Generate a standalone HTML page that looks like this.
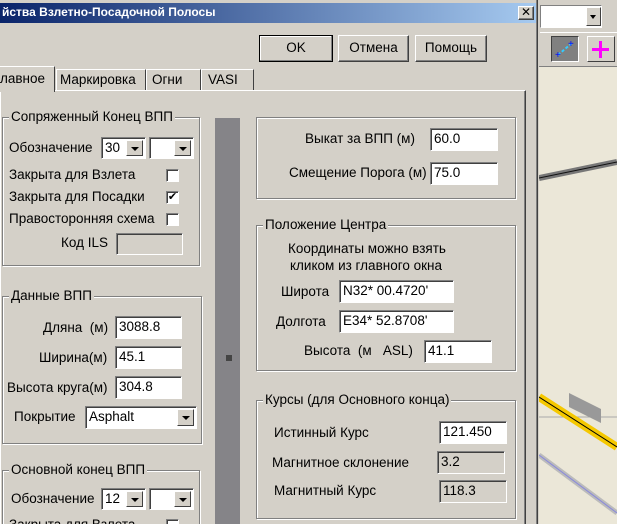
<!DOCTYPE html>
<html style="overflow:hidden"><head><meta charset="utf-8"><style>
*{box-sizing:border-box;margin:0;padding:0}
html,body{overflow:hidden}
body{width:617px;height:524px;background:#d4d0c8;font-family:"Liberation Sans","DejaVu Sans",sans-serif;font-size:13px;color:#000;position:relative}
.a{position:absolute}
.t{position:absolute;white-space:nowrap;font-size:13.5px}
.btn{position:absolute;background:#d4d0c8;border:1px solid;border-color:#fff #404040 #404040 #fff;box-shadow:inset -1px -1px 0 #808080;text-align:center;font-size:13.5px}
.in{position:absolute;background:#fff;border:1px solid;border-color:#808080 #fff #fff #808080;box-shadow:inset 1px 1px 0 #404040;padding:2px 0 0 3px;font-size:13.5px;white-space:nowrap}
.dis{background:#d4d0c8}
.grp{position:absolute;border:1px solid #808080;box-shadow:1px 1px 0 #fff,inset 1px 1px 0 #fff}
.grp span{position:absolute;top:-9px;left:6px;background:#d4d0c8;padding:0 2px;font-size:13.5px;white-space:nowrap}
.dd{position:absolute;width:17px;top:2px;bottom:2px;right:2px;background:#d4d0c8;border:1px solid;border-color:#fff #404040 #404040 #fff}
.dd:after{content:"";position:absolute;left:4px;top:6px;border:4px solid transparent;border-top:4px solid #000;border-bottom:0}
.cb{position:absolute;width:13px;height:13px;background:#fff;border:1px solid;border-color:#808080 #fff #fff #808080;box-shadow:inset 1px 1px 0 #404040;font-size:11px;line-height:11px;text-align:center}
</style></head><body>
<div class="a" style="left:538px;top:0;width:79px;height:524px;background:#d4d0c8"></div>
<div class="a" style="left:540px;top:5px;width:62px;height:23px;background:#fff;border:1px solid;border-color:#808080 #fff #fff #808080"></div>
<div class="a" style="left:586px;top:7px;width:15px;height:19px;background:#d4d0c8;border:1px solid;border-color:#fff #404040 #404040 #fff"></div>
<div class="a" style="left:590px;top:15px;border:3.5px solid transparent;border-top:4px solid #000;border-bottom:0"></div>
<div class="a" style="left:540px;top:32px;width:77px;height:1px;background:#fff"></div>
<div class="a" style="left:551px;top:36px;width:28px;height:26px;background:#808080;border:1px solid;border-color:#404040 #fff #fff #404040"></div>
<svg class="a" style="left:555px;top:40px" width="20" height="18"><line x1="3" y1="15" x2="17" y2="3" stroke="#3cf" stroke-width="2" stroke-dasharray="3,2"/><text x="0" y="18" fill="#00f" font-size="10">+</text><text x="13" y="7" fill="#00f" font-size="10">+</text></svg>
<div class="a" style="left:587px;top:36px;width:28px;height:26px;border:1px solid;border-color:#fff #404040 #404040 #fff"></div>
<div class="a" style="left:592px;top:48px;width:17px;height:3px;background:#f0f"></div>
<div class="a" style="left:599px;top:41px;width:3px;height:17px;background:#f0f"></div>
<div class="a" style="left:539px;top:66px;width:78px;height:458px;background:#ebe7d8;border-top:1px solid #808080"></div>
<svg class="a" style="left:539px;top:66px" width="78" height="458">
<path d="M0 112 L78 96" stroke="#777" stroke-width="6"/><path d="M0 112 L78 96" stroke="#111" stroke-width="1"/>
<path d="M0 351 L78 351" stroke="#aaa" stroke-width="1"/>
<path d="M30 327 L62 343 L62 357 L30 341Z" fill="#999"/>
<path d="M0 331 L78 381" stroke="#f5c800" stroke-width="8"/><path d="M0 331 L78 381" stroke="#000" stroke-width="1"/>
<path d="M0 389 L78 447" stroke="#bbb" stroke-width="5"/><path d="M0 389 L78 447" stroke="#88d" stroke-width="1"/>
</svg>
<div class="a" style="left:0;top:0;width:538px;height:524px;background:#d4d0c8;border-right:1px solid #404040;box-shadow:inset -1px 0 0 #808080"></div>
<div class="a" style="left:0;top:3px;width:536px;height:20px;background:linear-gradient(90deg,#0a246a,#a6caf0)"></div>
<div class="t" style="left:2px;top:5px;color:#fff;font-weight:bold;font-size:12px">йства Взлетно-Посадочной Полосы</div>
<div class="btn" style="left:518px;top:6px;width:16px;height:14px;font-size:12px;line-height:11px;font-weight:bold">✕</div>
<div class="btn" style="left:259px;top:35px;width:74px;height:27px;line-height:24px;border:1px solid #000;box-shadow:inset -1px -1px 0 #808080,inset 1px 1px 0 #fff">OK</div>
<div class="btn" style="left:338px;top:35px;width:71px;height:27px;line-height:24px">Отмена</div>
<div class="btn" style="left:415px;top:35px;width:72px;height:27px;line-height:24px">Помощь</div>
<div class="a" style="left:0;top:90px;width:526px;height:434px;border:1px solid;border-bottom:0;border-color:#fff #404040 #404040 #fff;box-shadow:inset -1px 0 0 #808080"></div>
<div class="a" style="left:-3px;top:66px;width:58px;height:26px;background:#d4d0c8;border:1px solid;border-color:#fff #404040 transparent #fff;border-bottom:0"></div>
<div class="t" style="left:0;top:71px">лавное</div>
<div class="a" style="left:56px;top:69px;width:90px;height:21px;border:1px solid;border-color:#fff #404040 transparent #fff;border-bottom:0"></div>
<div class="t" style="left:60px;top:72px">Маркировка</div>
<div class="a" style="left:146px;top:69px;width:55px;height:21px;border:1px solid;border-color:#fff #404040 transparent #fff;border-bottom:0"></div>
<div class="t" style="left:152px;top:72px">Огни</div>
<div class="a" style="left:201px;top:69px;width:53px;height:21px;border:1px solid;border-color:#fff #404040 transparent #fff;border-bottom:0"></div>
<div class="t" style="left:208px;top:72px">VASI</div>
<div class="a" style="left:215px;top:118px;width:25px;height:406px;background:#858488"></div>
<div class="a" style="left:226px;top:355px;width:6px;height:6px;background:#444"></div>
<div class="grp" style="left:2px;top:117px;width:198px;height:149px"><span>Сопряженный Конец ВПП</span></div>
<div class="t" style="left:9px;top:140px">Обозначение</div>
<div class="in" style="left:101px;top:137px;width:45px;height:22px">30<div class="dd"></div></div>
<div class="in" style="left:149px;top:137px;width:45px;height:22px"><div class="dd"></div></div>
<div class="t" style="left:9px;top:167px">Закрыта для Взлета</div>
<div class="cb" style="left:166px;top:169px"></div>
<div class="t" style="left:9px;top:189px">Закрыта для Посадки</div>
<div class="cb" style="left:166px;top:191px">✔</div>
<div class="t" style="left:9px;top:211px">Правосторонняя схема</div>
<div class="cb" style="left:166px;top:213px"></div>
<div class="t" style="left:61px;top:235px">Код ILS</div>
<div class="in dis" style="left:116px;top:233px;width:67px;height:22px"></div>
<div class="grp" style="left:2px;top:296px;width:200px;height:148px"><span>Данные ВПП</span></div>
<div class="t" style="left:43px;top:320px">Дляна&nbsp; (м)</div>
<div class="in" style="left:115px;top:316px;width:67px;height:23px">3088.8</div>
<div class="t" style="left:39px;top:350px">Ширина(м)</div>
<div class="in" style="left:115px;top:346px;width:67px;height:23px">45.1</div>
<div class="t" style="left:7px;top:380px">Высота круга(м)</div>
<div class="in" style="left:115px;top:376px;width:67px;height:23px">304.8</div>
<div class="t" style="left:14px;top:409px">Покрытие</div>
<div class="in" style="left:85px;top:406px;width:112px;height:23px">Asphalt<div class="dd"></div></div>
<div class="grp" style="left:2px;top:470px;width:198px;height:70px"><span>Основной конец ВПП</span></div>
<div class="t" style="left:11px;top:491px">Обозначение</div>
<div class="in" style="left:101px;top:488px;width:45px;height:22px">12<div class="dd"></div></div>
<div class="in" style="left:149px;top:488px;width:45px;height:22px"><div class="dd"></div></div>
<div class="t" style="left:9px;top:517px">Закрыта для Взлета</div>
<div class="cb" style="left:166px;top:519px"></div>
<div class="grp" style="left:256px;top:117px;width:260px;height:82px"></div>
<div class="t" style="left:305px;top:131px">Выкат за ВПП (м)</div>
<div class="in" style="left:430px;top:128px;width:68px;height:23px">60.0</div>
<div class="t" style="left:289px;top:165px">Смещение Порога (м)</div>
<div class="in" style="left:430px;top:162px;width:68px;height:23px">75.0</div>
<div class="grp" style="left:256px;top:225px;width:260px;height:146px"><span>Положение Центра</span></div>
<div class="t" style="left:288px;top:241px">Координаты можно взять</div>
<div class="t" style="left:290px;top:258px">кликом из главного окна</div>
<div class="t" style="left:281px;top:284px">Широта</div>
<div class="in" style="left:339px;top:280px;width:115px;height:23px">N32* 00.4720'</div>
<div class="t" style="left:276px;top:314px">Долгота</div>
<div class="in" style="left:339px;top:310px;width:115px;height:23px">E34* 52.8708'</div>
<div class="t" style="left:304px;top:343px">Высота&nbsp; (м&nbsp;&nbsp; ASL)</div>
<div class="in" style="left:424px;top:340px;width:68px;height:23px">41.1</div>
<div class="grp" style="left:256px;top:400px;width:260px;height:119px"><span>Курсы (для Основного конца)</span></div>
<div class="t" style="left:274px;top:425px">Истинный Курс</div>
<div class="in" style="left:439px;top:421px;width:68px;height:23px">121.450</div>
<div class="t" style="left:272px;top:455px">Магнитное склонение</div>
<div class="in dis" style="left:437px;top:451px;width:68px;height:23px">3.2</div>
<div class="t" style="left:274px;top:483px">Магнитный Курс</div>
<div class="in dis" style="left:439px;top:480px;width:68px;height:23px">118.3</div>
</body></html>
